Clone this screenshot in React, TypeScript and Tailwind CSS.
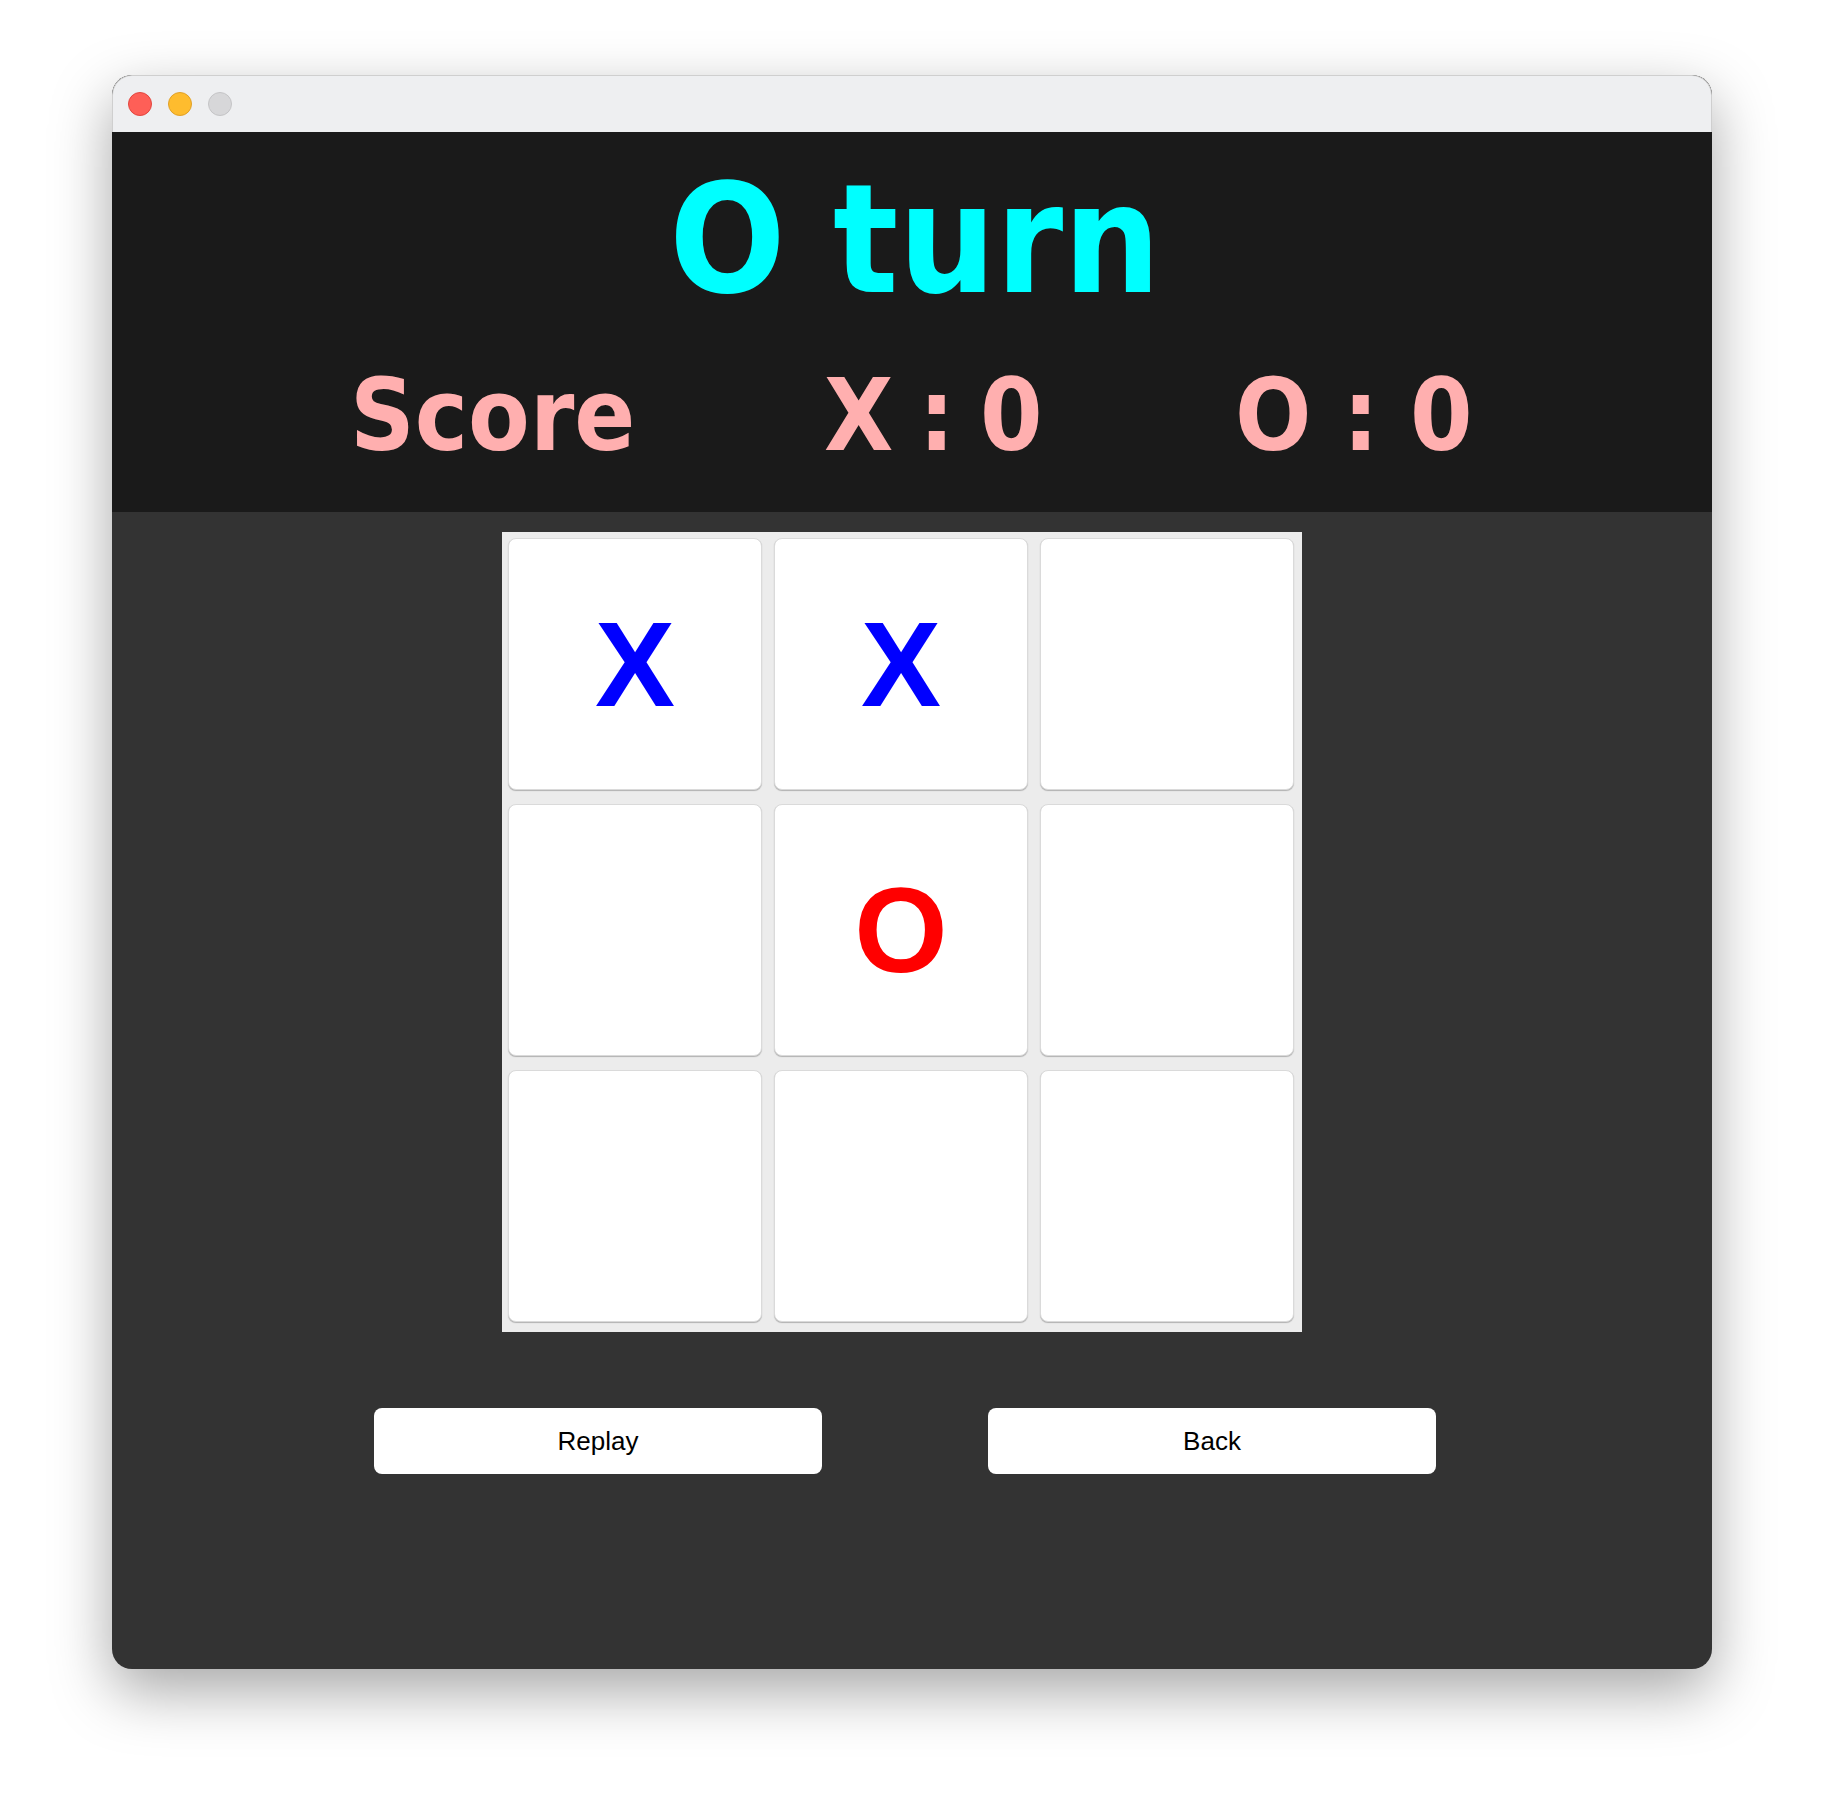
import React from 'react'

type Mark = 'X' | 'O' | ''

const BOARD: Mark[] = ['X', 'X', '', '', 'O', '', '', '', '']

const MARK_COLORS: Record<string, string> = {
  X: 'text-[#0000ff]',
  O: 'text-[#ff0000]',
}

function Cell({ mark }: { mark: Mark }) {
  return (
    <div className="flex items-center justify-center rounded-[8px] border border-[#dadada] bg-white shadow-[0_1px_1px_rgba(0,0,0,0.25)]">
      <span
        className={`text-[120px] font-bold leading-none ${MARK_COLORS[mark] ?? ''}`}
        style={{ fontFamily: '"Liberation Sans", Arial, sans-serif' }}
      >
        {mark}
      </span>
    </div>
  )
}

// Fenêtre du jeu : titre du tour, score, grille 3x3 et deux boutons.
export default function App() {
  const condensed = { fontFamily: '"DejaVu Sans Condensed", "DejaVu Sans", sans-serif' }

  return (
    <div className="min-h-[1818px] w-full bg-white pl-[112px] pt-[75px]">
      <div className="flex h-[1594px] w-[1600px] flex-col overflow-hidden rounded-[20px] bg-[#333333] shadow-[0_22px_60px_rgba(0,0,0,0.35)]">
        {/* barre de titre */}
        <div className="flex h-[57px] shrink-0 items-center gap-[16px] rounded-t-[20px] border border-b-0 border-[#cfcfcf] bg-[#eeeff1] pl-[15px]">
          <span className="h-[24px] w-[24px] rounded-full border border-[#e2463f] bg-[#fe5f57]" />
          <span className="h-[24px] w-[24px] rounded-full border border-[#e0a028] bg-[#febc2e]" />
          <span className="h-[24px] w-[24px] rounded-full border border-[#c4c4c6] bg-[#d7d7d9]" />
        </div>

        {/* en-tête */}
        <div className="flex h-[380px] shrink-0 flex-col bg-[#1a1a1a]" style={condensed}>
          <div className="mt-[32px] flex justify-center pl-[6px]">
            <span className="text-[152px] font-bold leading-none text-[#00ffff] font-stretch-condensed">
              O turn
            </span>
          </div>
          <div className="mt-[50px] flex items-baseline pl-[238px] text-[100px] font-bold leading-none text-[#ffafaf] font-stretch-condensed">
            <span className="w-[474px]">Score</span>
            <span className="w-[411px] tracking-[-3px]">X : 0</span>
            <span>O : 0</span>
          </div>
        </div>

        {/* grille */}
        <div className="ml-[390px] mt-[20px] grid h-[800px] w-[800px] grid-cols-[254px_254px_254px] grid-rows-[252px_252px_252px] gap-x-[12px] gap-y-[14px] bg-[#ececec] pb-[10px] pl-[6px] pr-[8px] pt-[6px]">
          {BOARD.map((mark, i) => (
            <Cell key={i} mark={mark} />
          ))}
        </div>

        {/* boutons */}
        <div className="ml-[262px] mt-[76px] flex gap-[166px]">
          {['Replay', 'Back'].map((label) => (
            <button
              key={label}
              className="flex h-[66px] w-[448px] items-center justify-center rounded-[8px] bg-white text-[26px] text-black"
              style={{ fontFamily: '"Liberation Sans", Arial, sans-serif' }}
            >
              {label}
            </button>
          ))}
        </div>
      </div>
    </div>
  )
}
